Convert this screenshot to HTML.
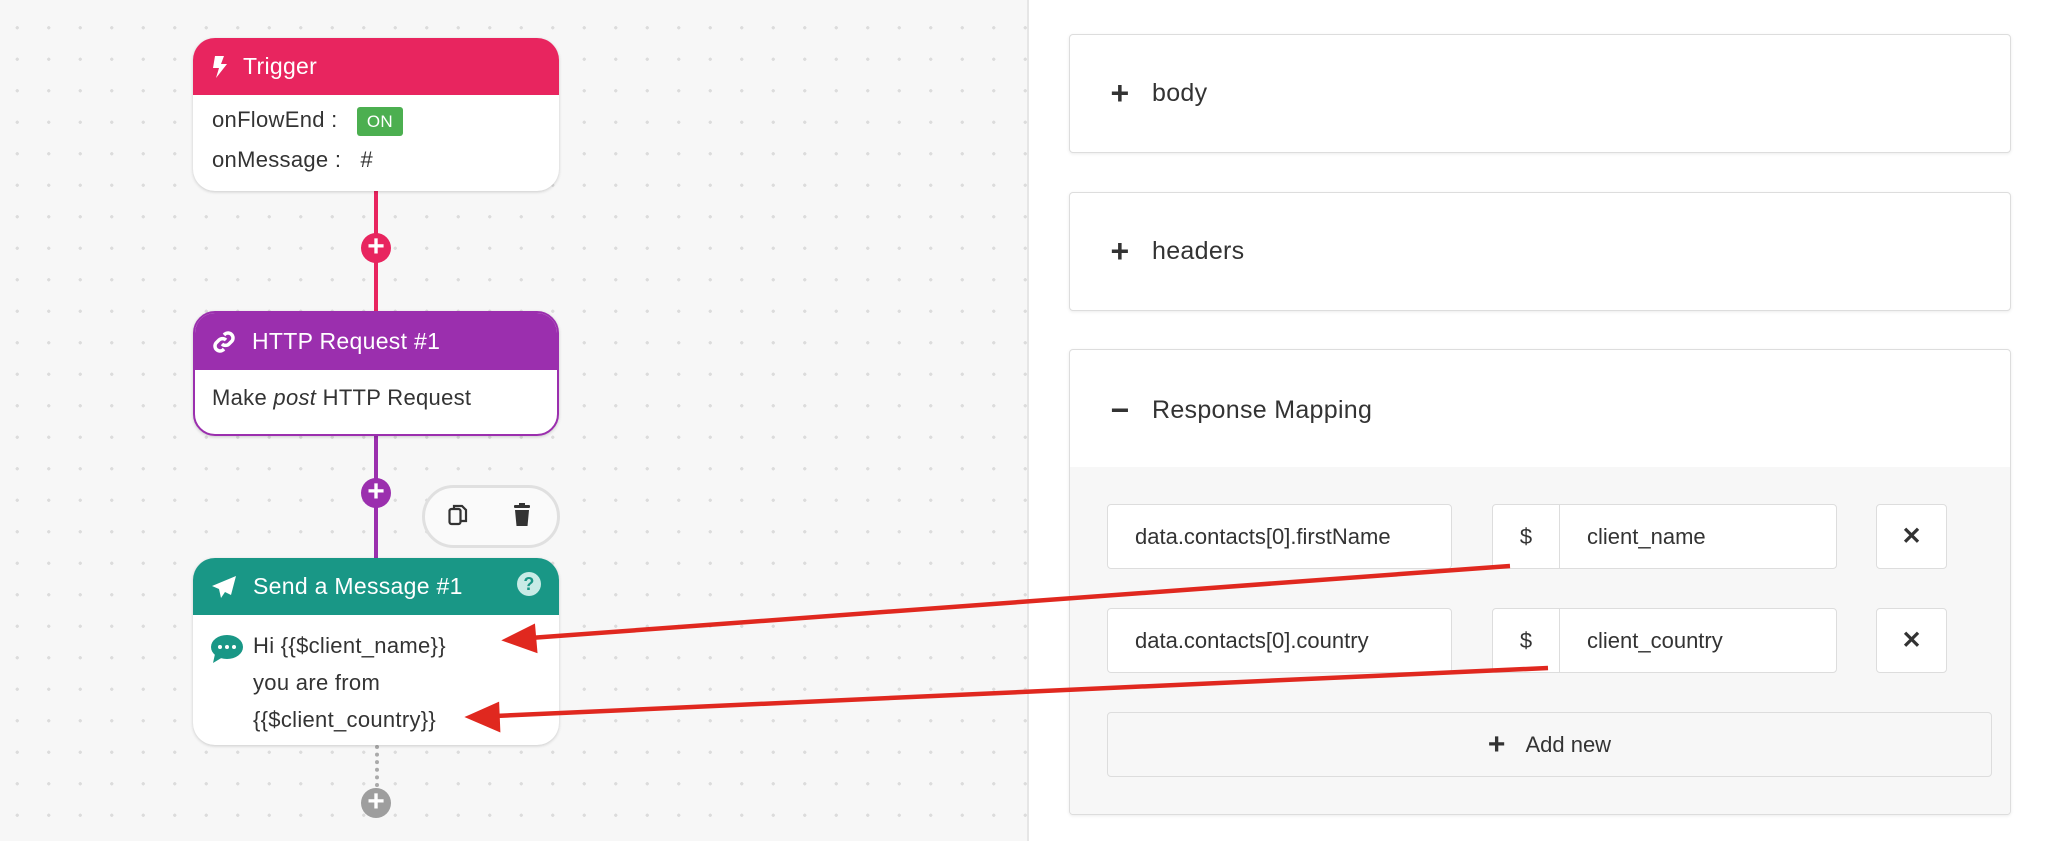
<!DOCTYPE html>
<html><head><meta charset="utf-8"><style>
*{box-sizing:border-box;margin:0;padding:0}
body{width:2048px;height:841px;overflow:hidden;position:relative;font-family:"Liberation Sans",sans-serif;color:#333;background:#fff}
#canvas{position:absolute;left:0;top:0;width:1029px;height:841px;background-color:#f7f7f7;background-image:radial-gradient(circle,#dcdcdc 1.5px,transparent 1.8px);background-size:31.5px 31.5px;background-position:159px 12px;border-right:2px solid #e6e6e6}
.node{position:absolute;left:193px;width:366px;background:#fff;border-radius:22px;overflow:hidden;box-shadow:0 1px 3px rgba(0,0,0,.18)}
.hd{color:#fff;font-size:23px;display:flex;align-items:center;padding-left:18px;letter-spacing:.3px}
.hd svg{margin-right:16px}
.bd{font-size:22px;color:#333;padding:12px 19px;letter-spacing:.3px}
.vline{position:absolute;left:374px;width:4px}
.plus{position:absolute;left:361px;width:30px;height:30px;border-radius:50%;color:#fff;font-size:30px;font-weight:bold;line-height:28px;text-align:center}
.panel{position:absolute;left:1069px;width:942px;background:#fff;border:1px solid #ddd;border-radius:4px;box-shadow:0 1px 3px rgba(0,0,0,.08)}
.ptitle{position:absolute;left:40px;font-size:25px;color:#333;display:flex;align-items:center;letter-spacing:.3px}
.ptitle b{font-size:32px;font-weight:bold;margin-right:22px;width:20px;display:inline-block;text-align:center}
.inp{position:absolute;height:65px;background:#fff;border:1px solid #ddd;border-radius:4px;font-size:22px;display:flex;align-items:center;padding-left:27px;color:#333}
</style></head><body>
<div id="canvas"></div>
<div class="vline" style="top:191px;height:120px;background:#e8255f"></div>
<div class="plus" style="top:233px;background:#e8255f">+</div>
<div class="vline" style="top:436px;height:122px;background:#9b2fae"></div>
<div class="plus" style="top:478px;background:#9b2fae">+</div>
<div style="position:absolute;left:375px;top:745px;height:42px;border-left:4px dotted #aaa"></div>
<div class="plus" style="top:788px;background:#9e9e9e">+</div>

<div class="node" style="top:38px;height:153px">
 <div class="hd" style="background:#e8255f;height:57px"><svg width="16" height="22" viewBox="0 0 16 22"><path d="M4 0h9l-3 8h6L5 22l3-10H2z" fill="#fff"/></svg>Trigger</div>
 <div class="bd" style="line-height:38px;padding-top:6px">onFlowEnd :&nbsp;&nbsp; <span style="background:#4caf50;color:#fff;font-size:17px;padding:5px 10px;border-radius:3px">ON</span><br>onMessage : &nbsp; #</div>
</div>
<div class="node" style="top:311px;height:125px;border:2px solid #9b2fae">
 <div class="hd" style="background:#9b2fae;height:57px;padding-left:17px"><svg width="24" height="24" viewBox="0 0 24 24" fill="none" stroke="#fff" stroke-width="3.5"><path d="M10 14a5 5 0 0 0 7 0l3-3a5 5 0 0 0-7-7l-1 1"/><path d="M14 10a5 5 0 0 0-7 0l-3 3a5 5 0 0 0 7 7l1-1"/></svg>HTTP Request #1</div>
 <div class="bd" style="padding-top:15px;padding-left:17px">Make <i>post</i> HTTP Request</div>
</div>
<div style="position:absolute;left:422px;top:485px;width:138px;height:63px;border:3px solid #e0e0e0;border-radius:32px;background:#fafafa"></div>
<svg style="position:absolute;left:448px;top:503px" width="20" height="24" viewBox="0 0 20 24" fill="none" stroke="#333" stroke-width="2.2"><rect x="1.5" y="6" width="11" height="15" rx="2"/><path d="M6 6V3h8l4 4v11h-5"/></svg>
<svg style="position:absolute;left:512px;top:503px" width="20" height="24" viewBox="0 0 20 24" fill="#333"><rect x="2" y="2" width="16" height="3" rx="1"/><rect x="7" y="0" width="6" height="3"/><path d="M3 7h14l-1.5 16h-11z"/></svg>
<div class="node" style="top:558px;height:187px">
 <div class="hd" style="background:#199786;height:57px"><svg width="26" height="24" viewBox="0 0 26 24"><path d="M25 1L1 11l7 3 2 9 4-6 6 3z" fill="#fff"/></svg>Send a Message #1<span style="position:absolute;right:18px;top:14px;width:24px;height:24px;border-radius:50%;background:#c8ebe6;color:#199786;font-size:18px;font-weight:bold;text-align:center;line-height:24px">?</span></div>
 <div class="bd" style="line-height:37px;padding:12px 0 0 60px;position:relative">
  <svg style="position:absolute;left:18px;top:19px" width="32" height="30" viewBox="0 0 32 30"><ellipse cx="16" cy="13" rx="16" ry="12" fill="#199786"/><path d="M4 20L2 29 12 23z" fill="#199786"/><circle cx="9" cy="13" r="2" fill="#fff"/><circle cx="16" cy="13" r="2" fill="#fff"/><circle cx="23" cy="13" r="2" fill="#fff"/></svg>
  Hi {{$client_name}}<br>you are from<br>{{$client_country}}</div>
</div>

<div class="panel" style="top:34px;height:119px"><div class="ptitle" style="top:40px"><b>+</b>body</div></div>
<div class="panel" style="top:192px;height:119px"><div class="ptitle" style="top:40px"><b>+</b>headers</div></div>
<div class="panel" style="top:349px;height:466px;overflow:hidden">
 <div class="ptitle" style="top:42px"><b>−</b>Response Mapping</div>
 <div style="position:absolute;left:0;right:0;top:117px;bottom:0;background:#f7f7f7"></div>
</div>
<div class="inp" style="left:1107px;top:504px;width:345px">data.contacts[0].firstName</div>
<div class="inp" style="left:1492px;top:504px;width:345px;padding-left:0"><span style="width:67px;text-align:center;border-right:1px solid #ddd;height:100%;line-height:63px">$</span><span style="padding-left:27px">client_name</span></div>
<div class="inp" style="left:1876px;top:504px;width:71px;padding:0;justify-content:center;font-weight:bold;font-size:24px">✕</div>
<div class="inp" style="left:1107px;top:608px;width:345px">data.contacts[0].country</div>
<div class="inp" style="left:1492px;top:608px;width:345px;padding-left:0"><span style="width:67px;text-align:center;border-right:1px solid #ddd;height:100%;line-height:63px">$</span><span style="padding-left:27px">client_country</span></div>
<div class="inp" style="left:1876px;top:608px;width:71px;padding:0;justify-content:center;font-weight:bold;font-size:24px">✕</div>
<div class="inp" style="left:1107px;top:712px;width:885px;padding:0;justify-content:center;background:#f7f7f7"><b style="font-size:30px;margin-right:20px">+</b>Add new</div>

<svg style="position:absolute;left:0;top:0" width="2048" height="841"><g stroke="#e0281f" stroke-width="4.5" fill="#e0281f"><line x1="1510" y1="566" x2="530" y2="638"/><path d="M507 640L533 627 535 650z"/><line x1="1548" y1="668" x2="495" y2="716"/><path d="M470 717L497 705 498 729z"/></g></svg>
</body></html>
